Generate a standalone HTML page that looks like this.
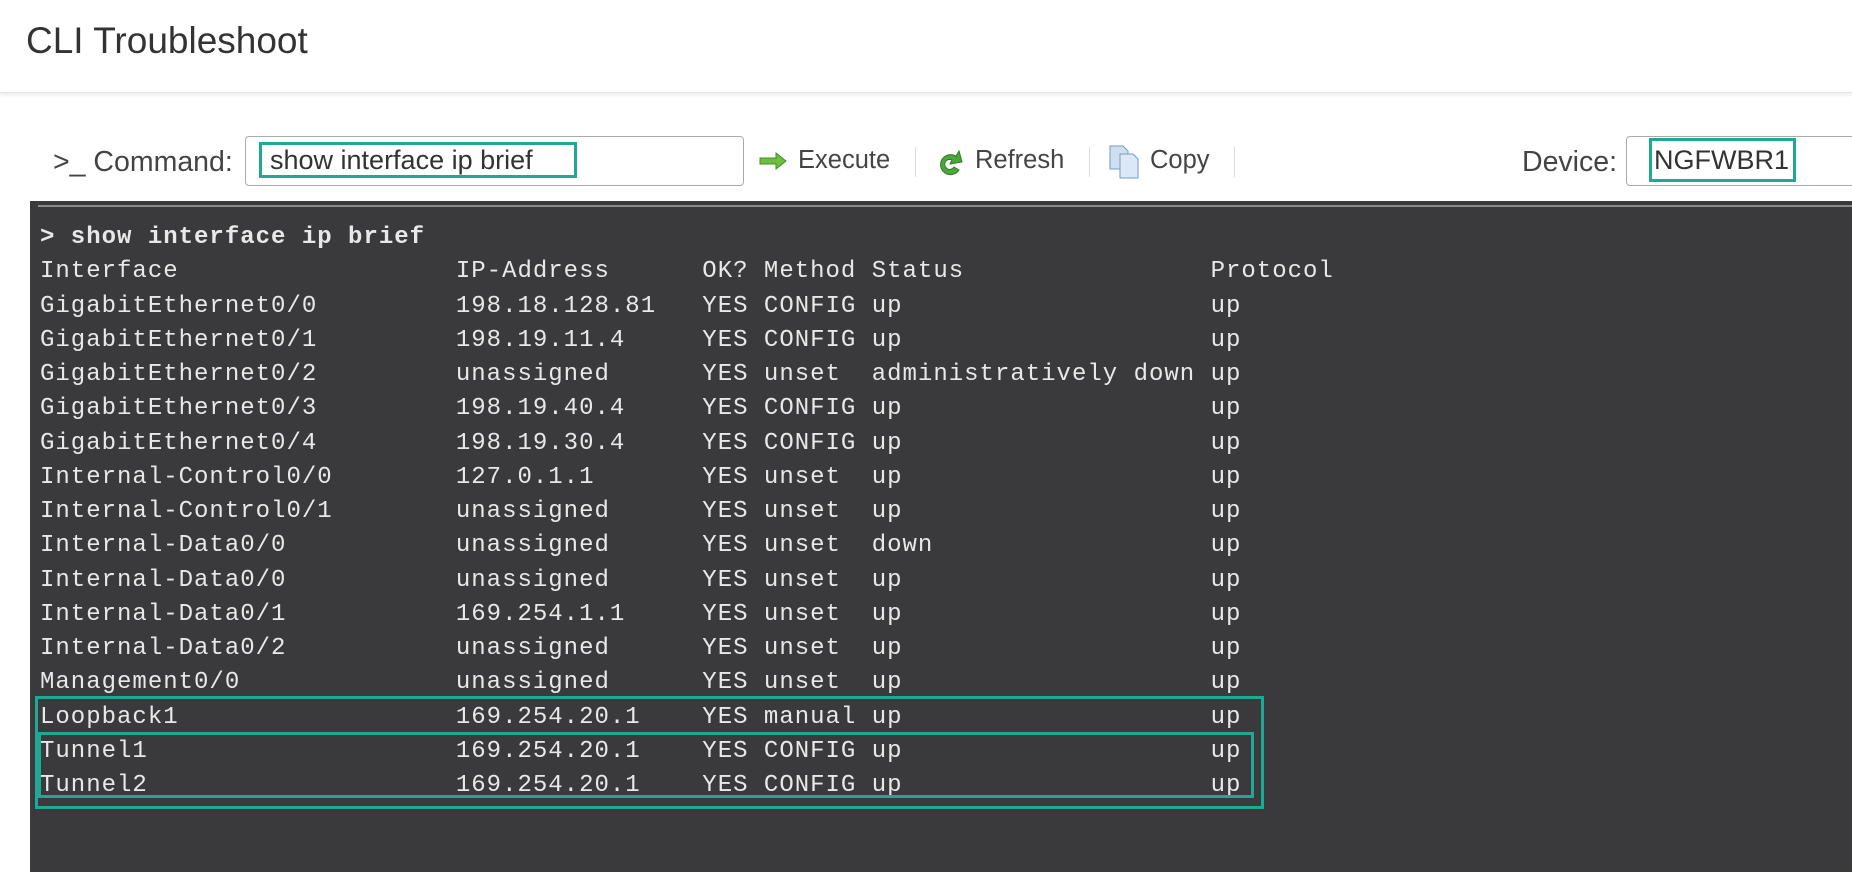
<!DOCTYPE html>
<html><head><meta charset="utf-8"><style>
html,body{margin:0;padding:0;width:1852px;height:872px;overflow:hidden;background:#fff;font-family:"Liberation Sans",sans-serif;}
.hdr{position:absolute;left:0;top:0;width:1852px;height:92px;background:#fff;border-bottom:1px solid #e4e4e4;box-shadow:0 2px 4px rgba(0,0,0,0.08);}
.title{position:absolute;left:26px;top:20px;font-size:37px;color:#333;}
.lbl{position:absolute;font-size:28.5px;color:#444;top:146px;}
.inp{position:absolute;top:136px;height:50px;border:1px solid #aaa;border-radius:4px;background:#fff;box-sizing:border-box;}
.hl{position:absolute;border:3px solid #1fa896;box-sizing:border-box;font-size:27px;color:#333;}
.btn{position:absolute;top:146px;font-size:25.5px;color:#444;}
.sep{position:absolute;top:147px;width:1px;height:30px;background:#ddd;}
.term{position:absolute;left:30px;top:201px;width:1822px;height:671px;background:#3a3a3c;}
.term:before{content:"";position:absolute;left:8px;right:0;top:4px;height:2px;background:#8a8a8a;}
pre{position:absolute;left:40px;top:221px;margin:0;font-family:"Liberation Mono",monospace;font-size:24px;letter-spacing:1px;line-height:34.25px;color:#e8e8e8;}
.box{position:absolute;border:3px solid #1fa896;box-sizing:border-box;}
</style></head><body>
<div class="hdr"><div class="title">CLI Troubleshoot</div></div>

<div class="lbl" style="left:53px">&gt;_ Command:</div>
<div class="inp" style="left:245px;width:499px;"></div>
<div class="hl" style="left:259px;top:142px;width:318px;height:36px;padding-left:8px;line-height:30px;">show interface ip brief</div>

<svg style="position:absolute;left:758px;top:152px" width="30" height="18" viewBox="0 0 30 18"><path d="M2 6h16V1l10 8-10 8v-5H2z" fill="#6cbf3f" stroke="#3f8f22" stroke-width="1"/></svg>
<div class="btn" style="left:798px">Execute</div>
<div class="sep" style="left:915px"></div>
<svg style="position:absolute;left:935px;top:148px" width="30" height="30" viewBox="0 0 30 30"><path d="M22 9 A10 10 0 1 0 24 22 L19 19 A5 5 0 1 1 17 12 L15 16 L27 14 L24 3 L21 8z" fill="#4aa83a" stroke="#2f7a25" stroke-width="1"/></svg>
<div class="btn" style="left:975px">Refresh</div>
<div class="sep" style="left:1089px"></div>
<svg style="position:absolute;left:1108px;top:144px" width="34" height="36" viewBox="0 0 34 36"><path d="M2 2h13l5 5v18H2z" fill="#cfdff2" stroke="#7a98c0"/><path d="M12 10h13l5 5v19H12z" fill="#dbe8f7" stroke="#7a98c0"/></svg>
<div class="btn" style="left:1150px">Copy</div>
<div class="sep" style="left:1234px"></div>

<div class="lbl" style="left:1522px">Device:</div>
<div class="inp" style="left:1626px;width:240px;"></div>
<div class="hl" style="left:1649px;top:138px;width:147px;height:44px;padding-left:2px;line-height:38px;">NGFWBR1</div>

<div class="term"></div>
<pre><b>&gt; show interface ip brief</b>
Interface                  IP-Address      OK? Method Status                Protocol
GigabitEthernet0/0         198.18.128.81   YES CONFIG up                    up
GigabitEthernet0/1         198.19.11.4     YES CONFIG up                    up
GigabitEthernet0/2         unassigned      YES unset  administratively down up
GigabitEthernet0/3         198.19.40.4     YES CONFIG up                    up
GigabitEthernet0/4         198.19.30.4     YES CONFIG up                    up
Internal-Control0/0        127.0.1.1       YES unset  up                    up
Internal-Control0/1        unassigned      YES unset  up                    up
Internal-Data0/0           unassigned      YES unset  down                  up
Internal-Data0/0           unassigned      YES unset  up                    up
Internal-Data0/1           169.254.1.1     YES unset  up                    up
Internal-Data0/2           unassigned      YES unset  up                    up
Management0/0              unassigned      YES unset  up                    up
Loopback1                  169.254.20.1    YES manual up                    up
Tunnel1                    169.254.20.1    YES CONFIG up                    up
Tunnel2                    169.254.20.1    YES CONFIG up                    up</pre>
<div class="box" style="left:35px;top:696px;width:1229px;height:113px;"></div>
<div class="box" style="left:38px;top:732px;width:1216px;height:66px;"></div>
</body></html>
